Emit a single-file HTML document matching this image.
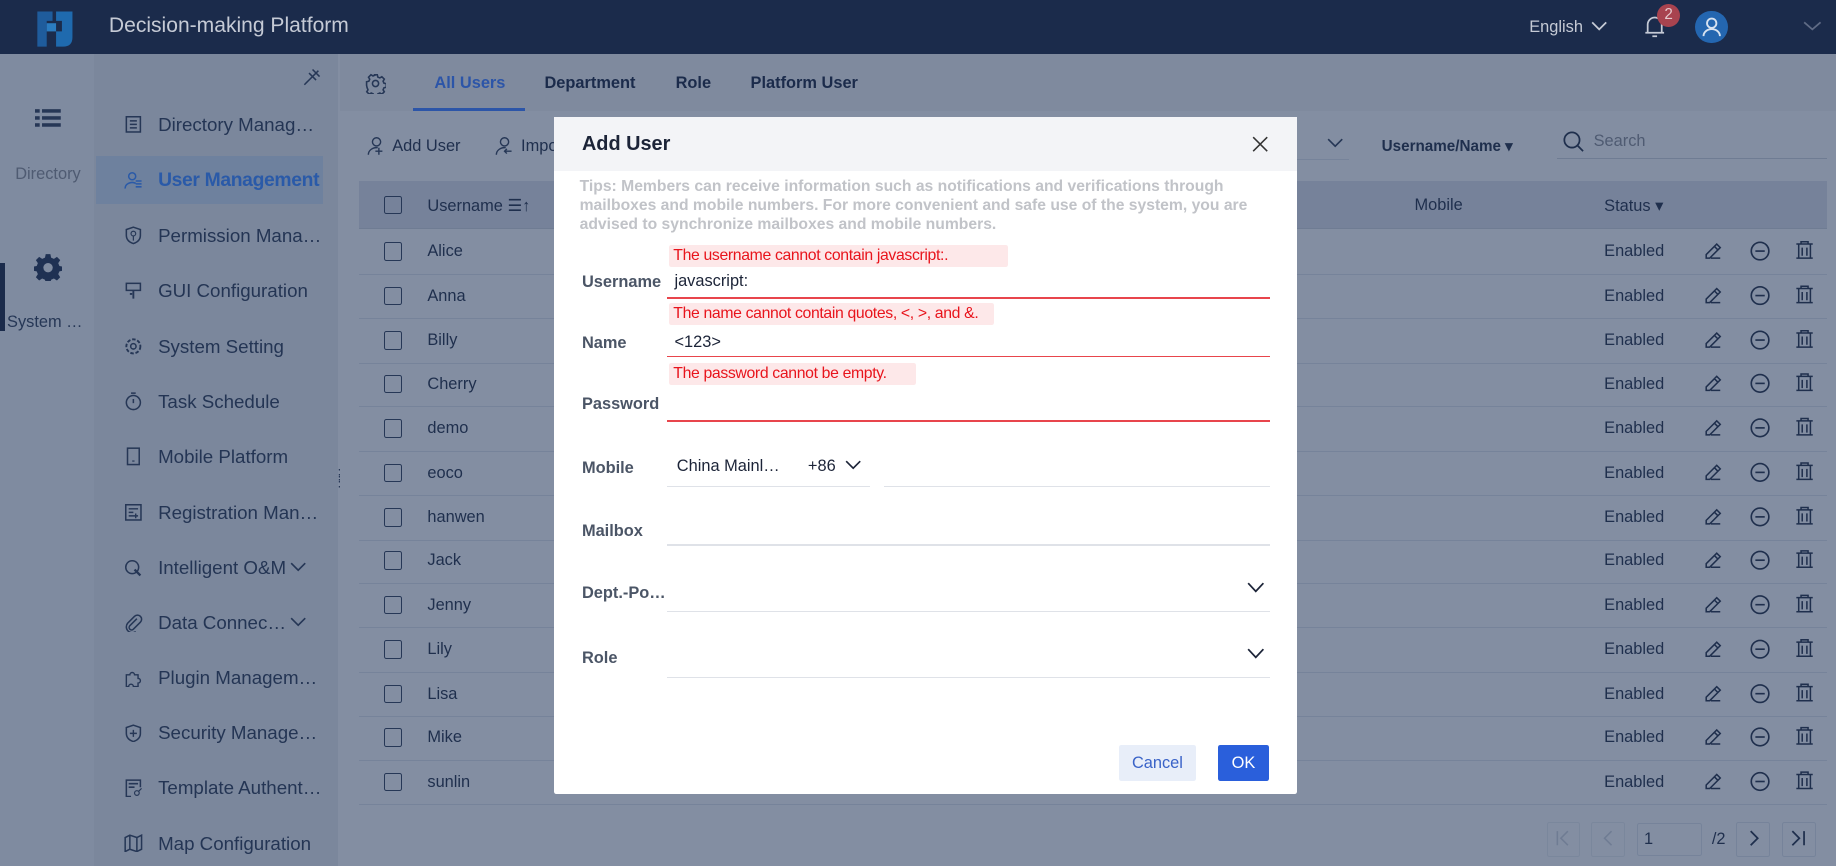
<!DOCTYPE html>
<html><head><meta charset="utf-8"><style>
html,body{margin:0;padding:0;width:1836px;height:866px;overflow:hidden;background:#838ea2}
#w{zoom:1.17092;width:1568px;height:740px;position:relative;font-family:"Liberation Sans",sans-serif;color:#1f2f4d;overflow:hidden}
.a{position:absolute}
.hd{left:0;top:0;width:1568px;height:46px;background:#1b2b4b}
.rail{left:0;top:46px;width:80px;height:694px;background:#7f8ba0}
.sb{left:80px;top:46px;width:209px;height:694px;background:#7b879c}
.main{left:290px;top:46px;width:1278px;height:694px;background:#838ea2}
.tabs{left:290px;top:46px;width:1278px;height:49px;background:#7f8a9e}
.si{left:106px;font-size:16px;color:#243554;white-space:nowrap}
.si svg{position:absolute;left:0;top:1px}
.si span{position:absolute;left:29px;top:0}
.row{left:307px;width:1253px;height:37.8px;border-bottom:1px solid #76839a;font-size:14px}
.row .cb{position:absolute;left:21px;top:11px;width:14px;height:14px;border:1px solid #263756;border-radius:2px}
.row .n{position:absolute;left:58px;top:11px}
.row .st{position:absolute;left:1063px;top:11px}
.m{left:473px;top:100px;width:635px;height:578px;background:#fff;border-radius:2px}
.lb{left:24px;font-size:14px;font-weight:bold;color:#4b5566}
.ln{left:97px;width:515px;height:1px;background:#dfe2e8}
.err{left:98px;height:19px;background:#fde8e9;color:#e8141c;font-size:13.5px;line-height:19px;padding-left:4px;border-radius:2px;white-space:nowrap;letter-spacing:-0.3px}
.pg{top:702px;width:27px;height:28px;border:1px solid #76839a;border-radius:2px}
</style></head><body><div id="w">
<div class="a hd">
 <svg class="a" style="left:30px;top:7px" width="34" height="33" viewBox="0 0 34 33"><path d="M2 3h13v8h-5v22H2z" fill="#1f5c9c"/><path d="M18 3h14v22q0 8-8 8h-6V20h5v-9h-5z" fill="#1f6aae"/><rect x="10" y="13" width="8" height="7" fill="#2b7cc0"/></svg>
 <div class="a" style="left:93px;top:12px;font-size:18px;color:#c5cad5">Decision-making Platform</div>
 <div class="a" style="left:1306px;top:15px;font-size:14px;color:#c5cad5">English</div>
 <svg class="a" style="left:1359px;top:17px" width="14" height="10"><path d="M1 2l6 6 6-6" stroke="#c5cad5" stroke-width="1.5" fill="none"/></svg>
 <svg class="a" style="left:1403px;top:12px" width="20" height="22"><path d="M4 16V9a6 6 0 0 1 12 0v7M2 16h16M8 19h4" stroke="#c5cad5" stroke-width="1.5" fill="none"/></svg>
 <div class="a" style="left:1415px;top:3px;width:20px;height:20px;border-radius:10px;background:#a8434f;color:#e6c9cd;font-size:13px;text-align:center;line-height:19px">2</div>
 <div class="a" style="left:1448px;top:9px;width:28px;height:28px;border-radius:14px;background:#2466b0"></div>
 <svg class="a" style="left:1452px;top:13px" width="20" height="20"><circle cx="10" cy="7" r="4" stroke="#d7e2f0" stroke-width="1.6" fill="none"/><path d="M3 18a7 6 0 0 1 14 0" stroke="#d7e2f0" stroke-width="1.6" fill="none"/></svg>
 <svg class="a" style="left:1540px;top:17px" width="16" height="10"><path d="M1 2l7 6 7-6" stroke="#5f6b85" stroke-width="1.5" fill="none"/></svg>
</div>
<div class="a rail">
 <svg class="a" style="left:30px;top:46px" width="22" height="18"><g fill="#263756"><rect x="0" y="1" width="4" height="3"/><rect x="6" y="1" width="16" height="3"/><rect x="0" y="7" width="4" height="3"/><rect x="6" y="7" width="16" height="3"/><rect x="0" y="13" width="4" height="3"/><rect x="6" y="13" width="16" height="3"/></g></svg>
 <div class="a" style="left:13px;top:95px;font-size:14px;color:#4f5b72">Directory</div>
 <div class="a" style="left:0;top:179px;width:4px;height:58px;background:#1b2b4b"></div>
 <svg class="a" style="left:29px;top:170px" width="24" height="24" viewBox="0 0 24 24"><path fill="#1f3153" d="M10 1h4l.6 3 2.4 1 2.6-1.7 2.8 2.8L20.7 8.7l1 2.4 3 .6v3.4l-3 .6-1 2.4 1.7 2.6-2.8 2.8-2.6-1.7-2.4 1-.6 3h-4l-.6-3-2.4-1-2.6 1.7-2.8-2.8 1.7-2.6-1-2.4-3-.6v-3.4l3-.6 1-2.4L1.6 6.1 4.4 3.3 7 5l2.4-1z"/><circle cx="12" cy="12.5" r="4" fill="#7f8ba0"/></svg>
 <div class="a" style="left:6px;top:221px;font-size:14px;color:#263756">System …</div>
</div>
<div class="a sb">
 <div class="a" style="left:2px;top:87px;width:194px;height:41px;background:#6e819e"></div>
 <svg class="a" style="left:178px;top:10px" width="18" height="18"><path d="M4 14l10-10M6 6l6 6M9 3l6 6M2 16l3-3" stroke="#263756" stroke-width="1.3" fill="none"/></svg>
</div>
<div class="a si" style="top:97px"><svg width="16" height="16"><rect x="2" y="1.5" width="12" height="13" stroke="#263756" fill="none" stroke-width="1.3"/><path d="M5 5h6M5 8h6M5 11h6" stroke="#263756" stroke-width="1.3"/></svg><span>Directory Manag…</span></div>
<div class="a si" style="top:145px;color:#2a5aa8;font-weight:bold;font-size:16.5px"><svg width="16" height="16"><circle cx="7" cy="4.5" r="3" stroke="#2a5aa8" fill="none" stroke-width="1.3"/><path d="M1 15a6 5 0 0 1 9-4.5M10 11h5M10 13.5h5M10 8.5h5" stroke="#2a5aa8" fill="none" stroke-width="1.3"/></svg><span style="letter-spacing:-0.3px">User Management</span></div>
<div class="a si" style="top:192px"><svg width="16" height="16"><path d="M8 1l6 2v5c0 4-3 6-6 7-3-1-6-3-6-7V3z" stroke="#263756" fill="none" stroke-width="1.3"/><circle cx="8" cy="6.5" r="2" stroke="#263756" fill="none"/><path d="M8 8.5v4" stroke="#263756"/></svg><span>Permission Mana…</span></div>
<div class="a si" style="top:239px"><svg width="16" height="16"><rect x="2" y="2" width="12" height="6" stroke="#263756" fill="none" stroke-width="1.3"/><path d="M8 8v7M5 11h2" stroke="#263756" stroke-width="1.6"/></svg><span>GUI Configuration</span></div>
<div class="a si" style="top:287px"><svg width="16" height="16"><circle cx="8" cy="8" r="6" stroke="#263756" fill="none" stroke-width="1.6" stroke-dasharray="3 1.5"/><circle cx="8" cy="8" r="2.3" stroke="#263756" fill="none" stroke-width="1.3"/></svg><span>System Setting</span></div>
<div class="a si" style="top:334px"><svg width="16" height="16"><circle cx="8" cy="9" r="6" stroke="#263756" fill="none" stroke-width="1.3"/><path d="M8 6v3.5M6 1h4" stroke="#263756" stroke-width="1.3"/></svg><span>Task Schedule</span></div>
<div class="a si" style="top:381px"><svg width="16" height="16"><rect x="3" y="1" width="10" height="14" stroke="#263756" fill="none" stroke-width="1.3"/><path d="M7 12h2" stroke="#263756"/></svg><span>Mobile Platform</span></div>
<div class="a si" style="top:429px"><svg width="16" height="16"><rect x="1.5" y="1.5" width="13" height="13" stroke="#263756" fill="none" stroke-width="1.3"/><path d="M4 5h8M4 8h4M4 11h4M10 9v4M8 11h4" stroke="#263756" stroke-width="1.2"/></svg><span>Registration Man…</span></div>
<div class="a si" style="top:476px"><svg width="16" height="16"><circle cx="7" cy="7" r="5.5" stroke="#263756" fill="none" stroke-width="1.3"/><path d="M9 9l5 5" stroke="#263756" stroke-width="2"/></svg><span>Intelligent O&amp;M</span><svg style="left:142px;top:4px" width="14" height="9"><path d="M1 1l6 6 6-6" stroke="#263756" stroke-width="1.4" fill="none"/></svg></div>
<div class="a si" style="top:523px"><svg width="16" height="16"><path d="M11 4l-6 6a2 2 0 0 0 3 3l6-6a3.5 3.5 0 0 0-5-5L3 8a5 5 0 0 0 7 7" stroke="#263756" fill="none" stroke-width="1.3"/></svg><span>Data Connec…</span><svg style="left:142px;top:4px" width="14" height="9"><path d="M1 1l6 6 6-6" stroke="#263756" stroke-width="1.4" fill="none"/></svg></div>
<div class="a si" style="top:570px"><svg width="16" height="16"><path d="M2 5h3a2 2 0 1 1 4 0h3v3a2 2 0 1 1 0 4v3H8a2 2 0 1 0-4 0H2z" stroke="#263756" fill="none" stroke-width="1.2"/></svg><span>Plugin Managem…</span></div>
<div class="a si" style="top:617px"><svg width="16" height="16"><path d="M8 1l6 2v5c0 4-3 6-6 7-3-1-6-3-6-7V3z" stroke="#263756" fill="none" stroke-width="1.3"/><path d="M8 5v6M5 8h6" stroke="#263756" stroke-width="1.2"/></svg><span>Security Manage…</span></div>
<div class="a si" style="top:664px"><svg width="16" height="16"><path d="M6 15H2V1h12v6M4 4h8M4 7h5" stroke="#263756" fill="none" stroke-width="1.3"/><circle cx="11" cy="12" r="2" stroke="#263756" fill="none"/><path d="M12.5 10.5l2.5-2.5" stroke="#263756"/></svg><span>Template Authent…</span></div>
<div class="a si" style="top:711px"><svg width="16" height="16"><path d="M1 3l4-2 6 2 4-2v12l-4 2-6-2-4 2zM5 1v12M11 3v12" stroke="#263756" fill="none" stroke-width="1.3"/></svg><span>Map Configuration</span></div>
<div class="a" style="left:284px;top:402px;font-size:12px;color:#263756;line-height:6px">⋮<br>⋮</div>

<div class="a main"></div>
<div class="a tabs"></div>
<svg class="a" style="left:312px;top:62px" width="18" height="18" viewBox="0 0 24 24"><path fill="none" stroke="#263756" stroke-width="1.8" d="M10 2h4l.6 2.6 2.3 1 2.3-1.4 2.8 2.8-1.4 2.3 1 2.3 2.6.6v4l-2.6.6-1 2.3 1.4 2.3-2.8 2.8-2.3-1.4-2.3 1-.6 2.6h-4l-.6-2.6-2.3-1-2.3 1.4-2.8-2.8 1.4-2.3-1-2.3L1.8 14v-4l2.6-.6 1-2.3L4 4.8 6.8 2l2.3 1.4 2.3-1z"/><circle cx="12" cy="12" r="3.5" fill="none" stroke="#263756" stroke-width="1.8"/></svg>
<div class="a" style="left:371px;top:63px;font-size:14px;font-weight:bold;color:#2c55a8">All Users</div>
<div class="a" style="left:353px;top:92px;width:95px;height:3px;background:#2c55a8"></div>
<div class="a" style="left:465px;top:63px;font-size:14px;font-weight:bold;color:#1b2b4b">Department</div>
<div class="a" style="left:577px;top:63px;font-size:14px;font-weight:bold;color:#1b2b4b">Role</div>
<div class="a" style="left:641px;top:63px;font-size:14px;font-weight:bold;color:#1b2b4b">Platform User</div>
<svg class="a" style="left:313px;top:116px" width="17" height="17"><circle cx="9" cy="5" r="3.5" stroke="#263756" fill="none" stroke-width="1.2"/><path d="M2 16a7 6 0 0 1 8-6M8 13h6M11 10v6" stroke="#263756" fill="none" stroke-width="1.2"/></svg>
<div class="a" style="left:335px;top:117px;font-size:14px;color:#1f2f4d">Add User</div>
<svg class="a" style="left:422px;top:116px" width="17" height="17"><circle cx="9" cy="5" r="3.5" stroke="#263756" fill="none" stroke-width="1.2"/><path d="M2 16a7 6 0 0 1 8-6M9 13h6M11 11l-2 2 2 2" stroke="#263756" fill="none" stroke-width="1.2"/></svg>
<div class="a" style="left:445px;top:117px;font-size:14px;color:#1f2f4d">Impo</div>
<svg class="a" style="left:1133px;top:118px" width="14" height="9"><path d="M1 1l6 6 6-6" stroke="#263756" stroke-width="1.4" fill="none"/></svg>
<div class="a" style="left:1108px;top:136px;width:44px;height:1px;background:#76839a"></div>
<div class="a" style="left:1180px;top:117px;font-size:13px;font-weight:bold;color:#1f2f4d">Username/Name ▾</div>
<svg class="a" style="left:1334px;top:111px" width="20" height="20"><circle cx="8.5" cy="8.5" r="6.5" stroke="#1f2f4d" stroke-width="1.5" fill="none"/><path d="M13 13l5 5" stroke="#1f2f4d" stroke-width="1.5"/></svg>
<div class="a" style="left:1361px;top:113px;font-size:14px;color:#4f5b72">Search</div>
<div class="a" style="left:1330px;top:135px;width:230px;height:1px;background:#6f7c93"></div>

<div class="a" style="left:307px;top:155px;width:1253px;height:40px;background:#76829a;border-bottom:1px solid #6f7c93"></div>
<div class="a" style="left:328px;top:167px;width:14px;height:14px;border:1px solid #263756;border-radius:2px"></div>
<div class="a" style="left:365px;top:167px;font-size:14px">Username ☰↑</div>
<div class="a" style="left:1208px;top:167px;font-size:14px">Mobile</div>
<div class="a" style="left:1370px;top:167px;font-size:14px">Status ▾</div>

<div class="a row" style="top:196px"><div class="cb"></div><div class="n">Alice</div><div class="st">Enabled</div></div>
<div class="a row" style="top:234px"><div class="cb"></div><div class="n">Anna</div><div class="st">Enabled</div></div>
<div class="a row" style="top:272px"><div class="cb"></div><div class="n">Billy</div><div class="st">Enabled</div></div>
<div class="a row" style="top:309px"><div class="cb"></div><div class="n">Cherry</div><div class="st">Enabled</div></div>
<div class="a row" style="top:347px"><div class="cb"></div><div class="n">demo</div><div class="st">Enabled</div></div>
<div class="a row" style="top:385px"><div class="cb"></div><div class="n">eoco</div><div class="st">Enabled</div></div>
<div class="a row" style="top:423px"><div class="cb"></div><div class="n">hanwen</div><div class="st">Enabled</div></div>
<div class="a row" style="top:460px"><div class="cb"></div><div class="n">Jack</div><div class="st">Enabled</div></div>
<div class="a row" style="top:498px"><div class="cb"></div><div class="n">Jenny</div><div class="st">Enabled</div></div>
<div class="a row" style="top:536px"><div class="cb"></div><div class="n">Lily</div><div class="st">Enabled</div></div>
<div class="a row" style="top:574px"><div class="cb"></div><div class="n">Lisa</div><div class="st">Enabled</div></div>
<div class="a row" style="top:611px"><div class="cb"></div><div class="n">Mike</div><div class="st">Enabled</div></div>
<div class="a row" style="top:649px"><div class="cb"></div><div class="n">sunlin</div><div class="st">Enabled</div></div>

<svg class="a" style="left:1450px;top:196px" width="110" height="492">
 <defs><g id="ic"><path d="M7 17l9-9 3 3-9 9H7zM14 10l3 3M11 20h8" stroke="#1f2f4d" stroke-width="1.3" fill="none"/><circle cx="53" cy="14" r="7.5" stroke="#1f2f4d" stroke-width="1.4" fill="none"/><path d="M49 14h8" stroke="#1f2f4d" stroke-width="1.4"/><path d="M84 8h14M88 8V6h6v2M86 8v12h10V8M89 11v7M93 11v7M84 20h14" stroke="#1f2f4d" stroke-width="1.3" fill="none"/></g></defs>
 <use href="#ic" y="4"/><use href="#ic" y="42"/><use href="#ic" y="80"/><use href="#ic" y="117"/><use href="#ic" y="155"/><use href="#ic" y="193"/><use href="#ic" y="231"/><use href="#ic" y="268"/><use href="#ic" y="306"/><use href="#ic" y="344"/><use href="#ic" y="382"/><use href="#ic" y="419"/><use href="#ic" y="457"/>
</svg>

<div class="a pg" style="left:1321px;border-color:#7a879c"></div>
<svg class="a" style="left:1328px;top:709px" width="14" height="14"><path d="M2 1v12M11 1L5 7l6 6" stroke="#6f7c93" stroke-width="1.3" fill="none"/></svg>
<div class="a pg" style="left:1359px;border-color:#7a879c"></div>
<svg class="a" style="left:1367px;top:709px" width="14" height="14"><path d="M9 1L3 7l6 6" stroke="#6f7c93" stroke-width="1.3" fill="none"/></svg>
<div class="a pg" style="left:1398px;width:54px;top:703px;height:26px"></div>
<div class="a" style="left:1404px;top:709px;font-size:14px">1</div>
<div class="a" style="left:1462px;top:709px;font-size:14px">/2</div>
<div class="a pg" style="left:1483px"></div>
<svg class="a" style="left:1491px;top:709px" width="14" height="14"><path d="M4 1l6 6-6 6" stroke="#1f2f4d" stroke-width="1.5" fill="none"/></svg>
<div class="a pg" style="left:1522px"></div>
<svg class="a" style="left:1529px;top:709px" width="14" height="14"><path d="M2 1l6 6-6 6M12 1v12" stroke="#1f2f4d" stroke-width="1.5" fill="none"/></svg>

<div class="a m">
 <div class="a" style="left:0;top:0;width:635px;height:46px;background:#f3f4f7"></div>
 <div class="a" style="left:24px;top:14px;font-size:17px;font-weight:bold;color:#1c2438">Add User</div>
 <svg class="a" style="left:596px;top:16px" width="14" height="14"><path d="M1 1l12 12M13 1L1 13" stroke="#333" stroke-width="1.3"/></svg>
 <div class="a" style="left:22px;top:52px;width:590px;font-size:13.4px;font-weight:bold;color:#c1c3c8;line-height:16.2px">Tips: Members can receive information such as notifications and verifications through mailboxes and mobile numbers. For more convenient and safe use of the system, you are advised to synchronize mailboxes and mobile numbers.</div>

 <div class="a err" style="top:109px;width:286px">The username cannot contain javascript:.</div>
 <div class="a lb" style="top:133px">Username</div>
 <div class="a" style="left:103px;top:132px;font-size:14px;color:#1c2438">javascript:</div>
 <div class="a ln" style="top:154px;background:#e8454c"></div>

 <div class="a err" style="top:159px;width:274px">The name cannot contain quotes, &lt;, &gt;, and &amp;.</div>
 <div class="a lb" style="top:185px">Name</div>
 <div class="a" style="left:103px;top:184px;font-size:14px;color:#1c2438">&lt;123&gt;</div>
 <div class="a ln" style="top:204px;background:#e8454c"></div>

 <div class="a err" style="top:210px;width:207px">The password cannot be empty.</div>
 <div class="a lb" style="top:237px">Password</div>
 <div class="a ln" style="top:259px;background:#e8454c"></div>

 <div class="a lb" style="top:292px">Mobile</div>
 <div class="a" style="left:105px;top:290px;font-size:14px;color:#1c2438">China Mainl…</div>
 <div class="a" style="left:217px;top:290px;font-size:14px;color:#1c2438">+86</div>
 <svg class="a" style="left:249px;top:293px" width="14" height="9"><path d="M1 1l6 6 6-6" stroke="#1c2438" stroke-width="1.4" fill="none"/></svg>
 <div class="a ln" style="top:315px;width:173px"></div>
 <div class="a ln" style="left:282px;top:315px;width:330px"></div>

 <div class="a lb" style="top:346px">Mailbox</div>
 <div class="a ln" style="top:365px"></div>

 <div class="a lb" style="top:399px">Dept.-Po…</div>
 <svg class="a" style="left:592px;top:397px" width="15" height="10"><path d="M1 1l6.5 7 6.5-7" stroke="#1c2438" stroke-width="1.5" fill="none"/></svg>
 <div class="a ln" style="top:422px"></div>

 <div class="a lb" style="top:454px">Role</div>
 <svg class="a" style="left:592px;top:453px" width="15" height="10"><path d="M1 1l6.5 7 6.5-7" stroke="#1c2438" stroke-width="1.5" fill="none"/></svg>
 <div class="a ln" style="top:478px"></div>

 <div class="a" style="left:483px;top:536px;width:65px;height:31px;background:#e8eef9;border-radius:2px;color:#3a63c8;font-size:14px;text-align:center;line-height:31px">Cancel</div>
 <div class="a" style="left:567px;top:536px;width:44px;height:31px;background:#2a5fdb;border-radius:2px;color:#fff;font-size:14px;text-align:center;line-height:31px">OK</div>
</div>
</div></body></html>
